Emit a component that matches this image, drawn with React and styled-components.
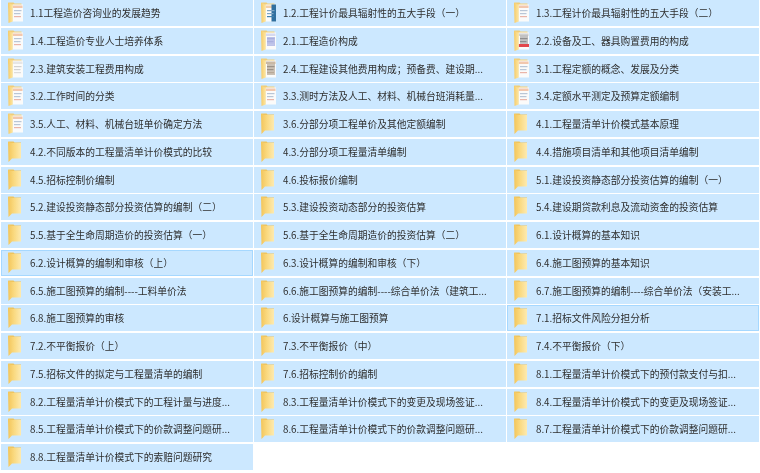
import React from 'react';
import styled, { createGlobalStyle } from 'styled-components';

const GlobalStyle = createGlobalStyle`
    html, body {
        margin: 0;
        padding: 0;
        background: #fff;
    }
`;

const items = [
    ['1.1工程造价咨询业的发展趋势', 'doc'],
    ['1.2.工程计价最具辐射性的五大手段（一）', 'blue'],
    ['1.3.工程计价最具辐射性的五大手段（二）', 'doc'],
    ['1.4.工程造价专业人士培养体系', 'doc'],
    ['2.1.工程造价构成', 'violet'],
    ['2.2.设备及工、器具购置费用的构成', 'red'],
    ['2.3.建筑安装工程费用构成', 'sheet'],
    ['2.4.工程建设其他费用构成；预备费、建设期...', 'brown'],
    ['3.1.工程定额的概念、发展及分类', 'doc'],
    ['3.2.工作时间的分类', 'doc'],
    ['3.3.测时方法及人工、材料、机械台班消耗量...', 'doc'],
    ['3.4.定额水平测定及预算定额编制', 'doc'],
    ['3.5.人工、材料、机械台班单价确定方法', 'doc'],
    ['3.6.分部分项工程单价及其他定额编制'],
    ['4.1.工程量清单计价模式基本原理'],
    ['4.2.不同版本的工程量清单计价模式的比较'],
    ['4.3.分部分项工程量清单编制'],
    ['4.4.措施项目清单和其他项目清单编制'],
    ['4.5.招标控制价编制'],
    ['4.6.投标报价编制'],
    ['5.1.建设投资静态部分投资估算的编制（一）'],
    ['5.2.建设投资静态部分投资估算的编制（二）'],
    ['5.3.建设投资动态部分的投资估算'],
    ['5.4.建设期贷款利息及流动资金的投资估算'],
    ['5.5.基于全生命周期造价的投资估算（一）'],
    ['5.6.基于全生命周期造价的投资估算（二）'],
    ['6.1.设计概算的基本知识'],
    ['6.2.设计概算的编制和审核（上）', null, true],
    ['6.3.设计概算的编制和审核（下）'],
    ['6.4.施工图预算的基本知识'],
    ['6.5.施工图预算的编制----工料单价法'],
    ['6.6.施工图预算的编制----综合单价法（建筑工...'],
    ['6.7.施工图预算的编制----综合单价法（安装工...'],
    ['6.8.施工图预算的审核'],
    ['6.设计概算与施工图预算'],
    ['7.1.招标文件风险分担分析', null, true],
    ['7.2.不平衡报价（上）'],
    ['7.3.不平衡报价（中）'],
    ['7.4.不平衡报价（下）'],
    ['7.5.招标文件的拟定与工程量清单的编制'],
    ['7.6.招标控制价的编制'],
    ['8.1.工程量清单计价模式下的预付款支付与扣...'],
    ['8.2.工程量清单计价模式下的工程计量与进度...'],
    ['8.3.工程量清单计价模式下的变更及现场签证...'],
    ['8.4.工程量清单计价模式下的变更及现场签证...'],
    ['8.5.工程量清单计价模式下的价款调整问题研...'],
    ['8.6.工程量清单计价模式下的价款调整问题研...'],
    ['8.7.工程量清单计价模式下的价款调整问题研...'],
    ['8.8.工程量清单计价模式下的索赔问题研究'],
];

// top band, body lines, bottom line of the page peeking out of the folder
const papers = {
    doc: ['#f2c7ae', '#b9c6d6', '#eab5a8'],
    sheet: ['#e6e6e6', '#d2d2d2', '#dcdcdc'],
    blue: ['#f3cfa8', '#7fa6c4', '#3f82b0'],
    violet: ['#d6d9f0', '#aab0de', '#c2c7ea'],
    red: ['#d0d0d0', '#8f8f8f', '#e2474c'],
    brown: ['#c9b8a4', '#9c9288', '#b8a896'],
};

const FolderGradients = () => (
    <svg width="0" height="0" style={{ position: 'absolute' }} aria-hidden="true">
        <defs>
            <linearGradient id="folderDoor" x1="0" y1="0" x2="1" y2="0">
                <stop offset="0" stopColor="#f3c55a" />
                <stop offset="0.45" stopColor="#fad97f" />
                <stop offset="1" stopColor="#fdeab0" />
            </linearGradient>
            <linearGradient id="paperDoor" x1="0" y1="0" x2="1" y2="0">
                <stop offset="0" stopColor="#f5cb68" />
                <stop offset="1" stopColor="#fde7a6" />
            </linearGradient>
        </defs>
    </svg>
);

const PlainFolder = () => (
    <Icon viewBox="0 0 16 22" aria-hidden="true">
        <path d="M0.5 0.5 L5.5 0.5 L6.5 1.5 L13 1.5 L13 4 L0.5 4 Z" fill="#f0c55e" />
        <path d="M0 0.5 L2.5 2 L13 2 L13 17.5 L4 17.5 L0.5 21 Z" fill="url(#folderDoor)" />
    </Icon>
);

const PaperFolder = ({ paper }) => {
    const colors = papers[paper];
    return (
        <Icon viewBox="0 0 16 22" aria-hidden="true">
            <path d="M0.5 0.5 L5.5 0.5 L6.5 1.5 L13.5 1.5 L13.5 6 L0.5 6 Z" fill="#f1cd78" />
            <rect x="4.5" y="2.5" width="10.5" height="17" fill="#fbfbfa" />
            <rect x="5" y="3.5" width="9.5" height="2.5" fill={colors[0]} />
            {paper === 'blue' && <rect x="10.5" y="2.5" width="4.5" height="17" fill="#2f6f9f" />}
            {paper === 'violet' && <rect x="6" y="7" width="8" height="9" fill="#bcc1e8" />}
            {paper === 'brown' && <rect x="6" y="6" width="8" height="11" fill="#cbc1b4" />}
            {paper === 'red' && <rect x="6" y="5" width="8" height="9" fill="#c2c2c2" />}
            <rect x="6" y="8" width="7.5" height="1.2" fill={colors[1]} />
            <rect x="6" y="11" width="6.5" height="1.2" fill={colors[1]} />
            <rect
                x={paper === 'red' ? 4.5 : 6}
                y="14"
                width={paper === 'red' ? 10.5 : 7}
                height={paper === 'red' ? 3 : 1.2}
                fill={colors[2]}
            />
            <path d="M0 0.5 L4.8 3 L4.8 19.5 L0.5 21 Z" fill="url(#paperDoor)" />
        </Icon>
    );
};

const App = () => {
    return (
        <>
            <GlobalStyle />
            <FolderGradients />
            <Grid>
                {items.map(([label, paper, hovered]) => (
                    <Cell key={label} $hovered={hovered}>
                        {paper ? <PaperFolder paper={paper} /> : <PlainFolder />}
                        <Label>{label}</Label>
                    </Cell>
                ))}
            </Grid>
        </>
    );
};

const Grid = styled.div`
    width: 760px;
    height: 473px;
    padding: 0 1px;
    box-sizing: border-box;
    display: grid;
    grid-template-columns: repeat(3, 252px);
    grid-auto-rows: 26px;
    column-gap: 1px;
    row-gap: 1.75px;
    align-content: start;
    overflow: hidden;
`;

const Cell = styled.div`
    box-sizing: border-box;
    display: flex;
    align-items: center;
    gap: 6px;
    padding: 0 8px 0 6px;
    background: #cce8ff;
    border: 1px solid ${(props) => (props.$hovered ? '#a6d8ff' : '#cce8ff')};
    min-width: 0;
`;

const Icon = styled.svg`
    width: 16px;
    height: 22px;
    flex: none;
    filter: blur(0.35px);
`;

const Label = styled.span`
    font-family: "Noto Sans CJK SC", "Liberation Sans", sans-serif;
    font-size: 9.75px;
    color: #2e2e2e;
    white-space: nowrap;
    filter: blur(0.3px);
`;

export default App;
